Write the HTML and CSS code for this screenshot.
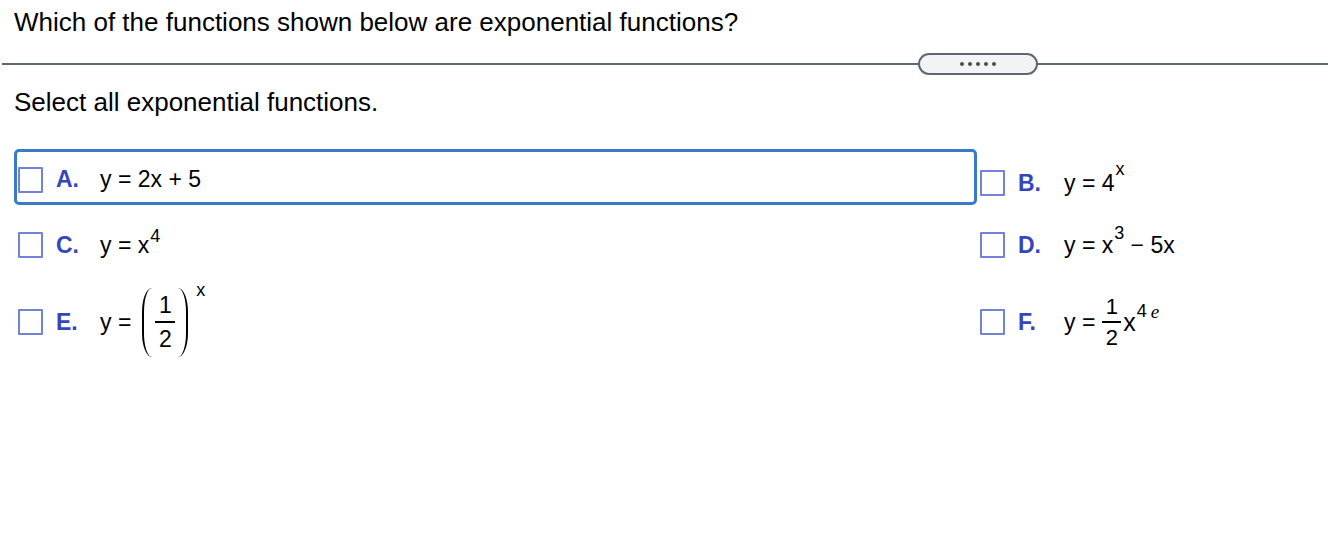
FILE: index.html
```html
<html lang="en">
<head>
  <meta charset="UTF-8">
  <title>Exponential Functions</title>
  <link rel="stylesheet" href="styles.css">
</head>
<body>

<div class="stem">Which of the functions shown below are exponential functions?</div>

<div class="divider">
  <span class="pill"><i></i><i></i><i></i><i></i><i></i></span>
</div>

<div class="prompt">Select all exponential functions.</div>

<div class="choices">
  <div class="choice focused">
    <span class="box"></span>
    <span class="letter">A.</span>
    <span class="math">y = 2x + 5</span>
  </div>
  <div class="choice right b">
    <span class="box"></span>
    <span class="letter">B.</span>
    <span class="math">y = 4<span class="sup high">x</span></span>
  </div>

  <div class="choice">
    <span class="box"></span>
    <span class="letter">C.</span>
    <span class="math">y = x<span class="sup">4</span></span>
  </div>
  <div class="choice right">
    <span class="box"></span>
    <span class="letter">D.</span>
    <span class="math">y = x<span class="sup mid">3</span> &minus; 5x</span>
  </div>

  <div class="choice">
    <span class="box"></span>
    <span class="letter">E.</span>
    <span class="math row"><span>y =</span><span class="paren open"></span><span class="frac big"><span>1</span><span class="bar"></span><span>2</span></span><span class="paren close"></span><span class="pow">x</span></span>
  </div>
  <div class="choice right">
    <span class="box"></span>
    <span class="letter">F.</span>
    <span class="math row"><span>y =</span><span class="frac"><span>1</span><span class="bar"></span><span>2</span></span><span class="term">x<span class="sup mid">4</span><span class="sup e">e</span></span></span>
  </div>
</div>

</body>
</html>
```

FILE: styles.css
```css
body {
  font-family: "Liberation Sans", Arial, sans-serif;
  background-color: white;
  color: #000;
  margin: 0;
  padding: 0;
}

.stem {
  font-size: 26px;
  padding: 6px 14px 0;
  height: 34px;
  line-height: 32px;
}

.divider {
  position: relative;
  height: 2px;
  background-color: #5e6874;
  margin: 23px 0 0 2px;
}

.pill {
  position: absolute;
  left: 916px;
  top: -10px;
  width: 116px;
  height: 18px;
  border: 2px solid #5e6874;
  border-radius: 11px;
  background-color: #f2f3f5;
  display: flex;
  justify-content: center;
  align-items: center;
  gap: 4px;
}

.pill i {
  width: 4px;
  height: 4px;
  border-radius: 50%;
  background-color: #474c54;
}

.prompt {
  font-size: 26px;
  padding: 0 14px;
  margin-top: 22px;
  height: 30px;
  line-height: 30px;
}

.choices {
  display: grid;
  grid-template-columns: 963px 1fr;
  grid-template-rows: 64px 64px 90px;
  margin: 32px 0 0 14px;
}

.choice {
  display: flex;
  align-items: center;
  padding-left: 4px;
}

.choice.focused {
  align-self: start;
  height: 45px;
  padding: 5px 0 0 1px;
  border: 3px solid #3a7bc8;
  border-radius: 5px;
}

.choice.right {
  padding-left: 3px;
}

.choice.b {
  padding-top: 4px;
}

.box {
  width: 21px;
  height: 22px;
  border: 2px solid #7182d8;
  border-radius: 1px;
  flex-shrink: 0;
}

.letter {
  font-weight: bold;
  font-size: 23px;
  color: #3546bd;
  margin-left: 13px;
  width: 44px;
}

.right .letter {
  width: 46px;
}

.math {
  font-size: 23px;
  white-space: nowrap;
}

.math.row {
  display: flex;
  align-items: center;
}

.sup {
  font-size: 18px;
  position: relative;
  top: -11px;
  margin-left: 1px;
}

.sup.mid {
  top: -14px;
}

.sup.high {
  top: -16px;
}

.sup.e {
  font-family: "Liberation Serif", "Times New Roman", serif;
  font-style: italic;
  font-size: 19px;
  margin-left: 4px;
  top: -13px;
}

.term {
  font-size: 25px;
}

.frac {
  display: inline-flex;
  flex-direction: column;
  align-items: center;
  font-size: 22px;
  line-height: 20px;
  margin: 0 2px 0 7px;
}

.frac .bar {
  width: 19px;
  height: 2px;
  background-color: #000;
  margin: 4px 0 5px;
}

.frac.big {
  font-size: 23px;
  margin: 0 3px;
}

.frac.big .bar {
  width: 20px;
  margin: 6px 0;
}

.paren {
  width: 8px;
  height: 69px;
  border: 0 solid #000;
  margin-left: 11px;
}

.paren.open {
  border-left-width: 2px;
  border-radius: 10px 0 0 10px / 24px 0 0 24px;
}

.paren.close {
  border-right-width: 2px;
  border-radius: 0 10px 10px 0 / 0 24px 24px 0;
  margin-left: 0;
}

.pow {
  font-size: 18px;
  align-self: flex-start;
  margin: -8px 0 0 8px;
}
```
